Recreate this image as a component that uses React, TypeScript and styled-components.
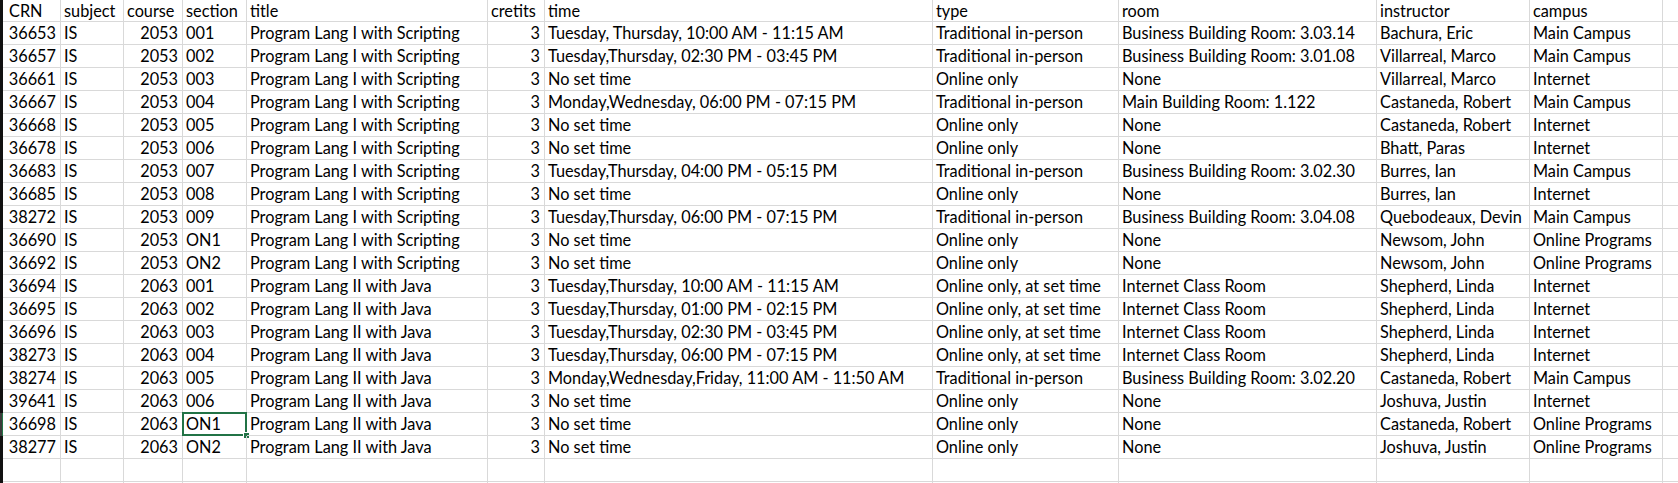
import React from "react";
import styled, { createGlobalStyle } from "styled-components";

const GlobalStyle = createGlobalStyle`
  html, body {
    margin: 0;
    padding: 0;
    background: #ffffff;
    overflow: hidden;
  }
  body {
    font-family: "Lato", "Liberation Sans", sans-serif;
  }
`;

type Align = "left" | "right";

type Course = {
  crn: string;
  subject: string;
  course: string;
  section: string;
  title: string;
  credits: string;
  time: string;
  type: string;
  room: string;
  instructor: string;
  campus: string;
};

type Column = {
  key: keyof Course;
  label: string;
  width: number;
  align: Align;
};

const columns: Column[] = [
  { key: "crn", label: "CRN", width: 58, align: "right" },
  { key: "subject", label: "subject", width: 63, align: "left" },
  { key: "course", label: "course", width: 59, align: "right" },
  { key: "section", label: "section", width: 64, align: "left" },
  { key: "title", label: "title", width: 241, align: "left" },
  { key: "credits", label: "cretits", width: 57, align: "right" },
  { key: "time", label: "time", width: 388, align: "left" },
  { key: "type", label: "type", width: 186, align: "left" },
  { key: "room", label: "room", width: 258, align: "left" },
  { key: "instructor", label: "instructor", width: 153, align: "left" },
  { key: "campus", label: "campus", width: 133, align: "left" },
];

const IS1 = "Program Lang I with Scripting";
const IS2 = "Program Lang II with Java";
const NOTIME = "No set time";
const ONLINE = "Online only";
const TRAD = "Traditional in-person";
const SET = "Online only, at set time";

const mk = (
  crn: string,
  course: string,
  section: string,
  title: string,
  time: string,
  type: string,
  room: string,
  instructor: string,
  campus: string
): Course => ({
  crn,
  subject: "IS",
  course,
  section,
  title,
  credits: "3",
  time,
  type,
  room,
  instructor,
  campus,
});

const rows: Course[] = [
  mk("36653", "2053", "001", IS1, "Tuesday, Thursday, 10:00 AM - 11:15 AM", TRAD, "Business Building Room: 3.03.14", "Bachura, Eric", "Main Campus"),
  mk("36657", "2053", "002", IS1, "Tuesday,Thursday, 02:30 PM - 03:45 PM", TRAD, "Business Building Room: 3.01.08", "Villarreal, Marco", "Main Campus"),
  mk("36661", "2053", "003", IS1, NOTIME, ONLINE, "None", "Villarreal, Marco", "Internet"),
  mk("36667", "2053", "004", IS1, "Monday,Wednesday, 06:00 PM - 07:15 PM", TRAD, "Main Building Room: 1.122", "Castaneda, Robert", "Main Campus"),
  mk("36668", "2053", "005", IS1, NOTIME, ONLINE, "None", "Castaneda, Robert", "Internet"),
  mk("36678", "2053", "006", IS1, NOTIME, ONLINE, "None", "Bhatt, Paras", "Internet"),
  mk("36683", "2053", "007", IS1, "Tuesday,Thursday, 04:00 PM - 05:15 PM", TRAD, "Business Building Room: 3.02.30", "Burres, Ian", "Main Campus"),
  mk("36685", "2053", "008", IS1, NOTIME, ONLINE, "None", "Burres, Ian", "Internet"),
  mk("38272", "2053", "009", IS1, "Tuesday,Thursday, 06:00 PM - 07:15 PM", TRAD, "Business Building Room: 3.04.08", "Quebodeaux, Devin", "Main Campus"),
  mk("36690", "2053", "ON1", IS1, NOTIME, ONLINE, "None", "Newsom, John", "Online Programs"),
  mk("36692", "2053", "ON2", IS1, NOTIME, ONLINE, "None", "Newsom, John", "Online Programs"),
  mk("36694", "2063", "001", IS2, "Tuesday,Thursday, 10:00 AM - 11:15 AM", SET, "Internet Class Room", "Shepherd, Linda", "Internet"),
  mk("36695", "2063", "002", IS2, "Tuesday,Thursday, 01:00 PM - 02:15 PM", SET, "Internet Class Room", "Shepherd, Linda", "Internet"),
  mk("36696", "2063", "003", IS2, "Tuesday,Thursday, 02:30 PM - 03:45 PM", SET, "Internet Class Room", "Shepherd, Linda", "Internet"),
  mk("38273", "2063", "004", IS2, "Tuesday,Thursday, 06:00 PM - 07:15 PM", SET, "Internet Class Room", "Shepherd, Linda", "Internet"),
  mk("38274", "2063", "005", IS2, "Monday,Wednesday,Friday, 11:00 AM - 11:50 AM", TRAD, "Business Building Room: 3.02.20", "Castaneda, Robert", "Main Campus"),
  mk("39641", "2063", "006", IS2, NOTIME, ONLINE, "None", "Joshuva, Justin", "Internet"),
  mk("36698", "2063", "ON1", IS2, NOTIME, ONLINE, "None", "Castaneda, Robert", "Online Programs"),
  mk("38277", "2063", "ON2", IS2, NOTIME, ONLINE, "None", "Joshuva, Justin", "Online Programs"),
];

// the active cell: section of row 36698
const SELECTED_ROW = 17;
const SELECTED_KEY: keyof Course = "section";

const gridTemplate = `3px ${columns.map((c) => `${c.width}px`).join(" ")} 40px`;

const Sheet = styled.div`
  width: 1678px;
  height: 483px;
  overflow: hidden;
  background: #ffffff;
  color: #000000;
  font-size: 16.3px;
`;

const Row = styled.div<{ $height: number }>`
  display: grid;
  grid-template-columns: ${gridTemplate};
  height: ${(p) => p.$height}px;
`;

const Edge = styled.div<{ $active?: boolean }>`
  background: ${(p) =>
    p.$active
      ? "linear-gradient(to right, #3c3c3c 0 2px, #217346 2px)"
      : "#111111"};
`;

const Cell = styled.div<{ $align?: Align; $first?: boolean }>`
  position: relative;
  box-sizing: border-box;
  border-right: 1px solid #d9d9d9;
  border-bottom: 1px solid #d9d9d9;
  padding: ${(p) =>
    p.$first && p.$align !== "right" ? "0 3px 0 6px" : "0 4px 0 3px"};
  text-align: ${(p) => p.$align ?? "left"};
  white-space: nowrap;
`;

const Text = styled.span<{ $header?: boolean }>`
  display: block;
  line-height: ${(p) => (p.$header ? "21px" : "22px")};
`;

const Selection = styled.div`
  position: absolute;
  top: -1px;
  left: -1px;
  right: -1px;
  bottom: -1px;
  box-sizing: border-box;
  border: 2px solid #217346;
  pointer-events: none;
`;

const FillHandle = styled.div`
  position: absolute;
  right: -4px;
  bottom: -4px;
  width: 5px;
  height: 5px;
  background: #217346;
  border-left: 1px solid #ffffff;
  border-top: 1px solid #ffffff;
`;

const EmptyRow = () => (
  <Row $height={23}>
    <Edge />
    {columns.map((c) => (
      <Cell key={c.key} />
    ))}
    <Cell />
  </Row>
);

export default function App() {
  return (
    <>
      <GlobalStyle />
      <Sheet>
        <Row $height={22}>
          <Edge />
          {columns.map((c, i) => (
            <Cell key={c.key} $first={i === 0}>
              <Text $header>{c.label}</Text>
            </Cell>
          ))}
          <Cell />
        </Row>
        {rows.map((r, ri) => (
          <Row key={r.crn + ri} $height={23}>
            <Edge $active={ri === SELECTED_ROW} />
            {columns.map((c, ci) => {
              const selected = ri === SELECTED_ROW && c.key === SELECTED_KEY;
              return (
                <Cell key={c.key} $align={c.align} $first={ci === 0}>
                  <Text>{r[c.key]}</Text>
                  {selected && (
                    <Selection>
                      <FillHandle />
                    </Selection>
                  )}
                </Cell>
              );
            })}
            <Cell />
          </Row>
        ))}
        <EmptyRow />
        <EmptyRow />
      </Sheet>
    </>
  );
}
